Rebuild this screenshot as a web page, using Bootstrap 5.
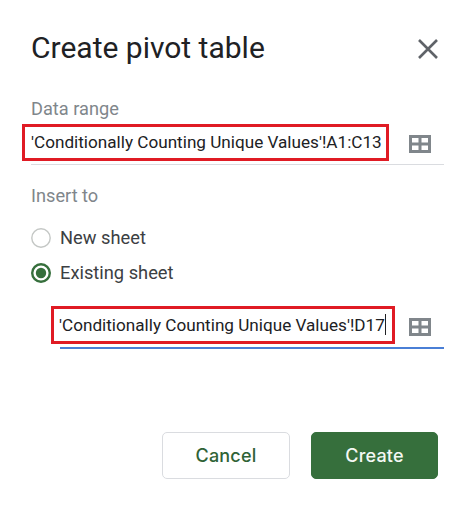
<!doctype html>
<html lang="en">
<head>
<meta charset="utf-8">
<title>Create pivot table</title>
<link href="https://cdn.jsdelivr.net/npm/bootstrap@5.3.0/dist/css/bootstrap.min.css" rel="stylesheet">
<style>
html, body { height: 100%; }
body { font-family: Roboto, "Liberation Sans", sans-serif; background: #fff; color: #202124; overflow: hidden; }
.pivot-dialog { width: 474px; height: 508px; padding: 28px 30px 0 31px; }
.pivot-title { font-size: 30px; font-weight: 400; line-height: 40px; margin: 0; color: #202124; }
.pivot-close { width: 24px; height: 24px; margin-right: 5px; padding: 0; border: 0; background: none; color: #5f6368; line-height: 0; }
.pivot-label { font-size: 18.2px; line-height: 22px; color: #80868b; margin: 0; }
.label-range { margin-top: 30px; }
.range-row { border-bottom: 1px solid #dadce0; margin-top: 4px; height: 41px; padding-bottom: 4px; }
.red-box { border: 3px solid #e01b24; height: 37px; margin-left: -9px; white-space: nowrap; font-size: 17.15px; color: #202124; padding-left: 6px; line-height: 31px; }
.box-one { width: 368px; }
.grid-ico { width: 22px; height: 18px; color: #80868b; flex: none; margin-right: 13px; margin-left: 20px; margin-top: 11px; }
.label-insert { margin-top: 20px; }
.radio-line { font-size: 18.3px; line-height: 24px; color: #3c4043; gap: 9px; height: 35px; }
.radio-list { margin-top: 13px; }
.radio-mark { width: 20px; height: 20px; flex: none; }
.target-row { margin-left: 29px; margin-top: 16px; border-bottom: 2px solid #4a7fd6; height: 43px; padding-bottom: 3px; }
.box-two { width: 344px; height: 38px; padding-left: 5px; line-height: 32px; }
.caret-bar { display: inline-block; width: 1px; height: 21px; background: #202124; vertical-align: -4px; }
.grid-two { margin-left: 14px; margin-top: 12px; margin-right: 12px; }
.btn-row { margin-top: 83px; gap: 21px; padding-right: 6px; }
.btn-row .btn { height: 47px; font-family: Inter, Roboto, sans-serif; font-size: 18px; font-weight: 500; letter-spacing: .2px; border-radius: 5px; padding: 0; line-height: 45px; }
.btn-row .btn-cancel { width: 128px; border: 1.5px solid #dadce0; color: #2f6336; background: #fff; }
.btn-row .btn-create { width: 127px; border: 1px solid #366f3c; background: #366f3c; color: #f4f8f4; }
</style>
</head>
<body>
<div class="pivot-dialog">
  <div class="d-flex justify-content-between align-items-center">
    <h1 class="pivot-title">Create pivot table</h1>
    <button class="pivot-close" type="button" aria-label="Close">
      <svg width="24" height="24" viewBox="0 0 24 24"><path d="M4 4 L22 22 M22 4 L4 22" stroke="currentColor" stroke-width="2.6" fill="none"/></svg>
    </button>
  </div>

  <p class="pivot-label label-range">Data range</p>
  <div class="range-row d-flex align-items-start">
    <div class="red-box box-one">'Conditionally Counting Unique Values'!A1:C13</div>
    <svg class="grid-ico" viewBox="0 0 22 18"><path d="M1.5 1.5H20.5V16.5H1.5Z M11 1.5V16.5 M1.5 9H20.5" fill="none" stroke="currentColor" stroke-width="3"/></svg>
  </div>

  <p class="pivot-label label-insert">Insert to</p>
  <div class="radio-list">
    <div class="radio-line d-flex align-items-center">
      <svg class="radio-mark" viewBox="0 0 20 20"><circle cx="10" cy="10" r="9.2" fill="none" stroke="#c4c7c5" stroke-width="1.4"/></svg>
      <span>New sheet</span>
    </div>
    <div class="radio-line d-flex align-items-center">
      <svg class="radio-mark" viewBox="0 0 20 20"><circle cx="10" cy="10" r="8.8" fill="none" stroke="#366f3c" stroke-width="2.4"/><circle cx="10" cy="10" r="5.2" fill="#366f3c"/></svg>
      <span>Existing sheet</span>
    </div>
  </div>

  <div class="target-row d-flex align-items-start">
    <div class="red-box box-two">'Conditionally Counting Unique Values'!D17<span class="caret-bar"></span></div>
    <svg class="grid-ico grid-two" viewBox="0 0 22 18"><path d="M1.5 1.5H20.5V16.5H1.5Z M11 1.5V16.5 M1.5 9H20.5" fill="none" stroke="currentColor" stroke-width="3"/></svg>
  </div>

  <div class="btn-row d-flex justify-content-end">
    <button class="btn btn-cancel" type="button">Cancel</button>
    <button class="btn btn-create" type="button">Create</button>
  </div>
</div>
<script src="https://cdn.jsdelivr.net/npm/bootstrap@5.3.0/dist/js/bootstrap.bundle.min.js"></script>
</body>
</html>
